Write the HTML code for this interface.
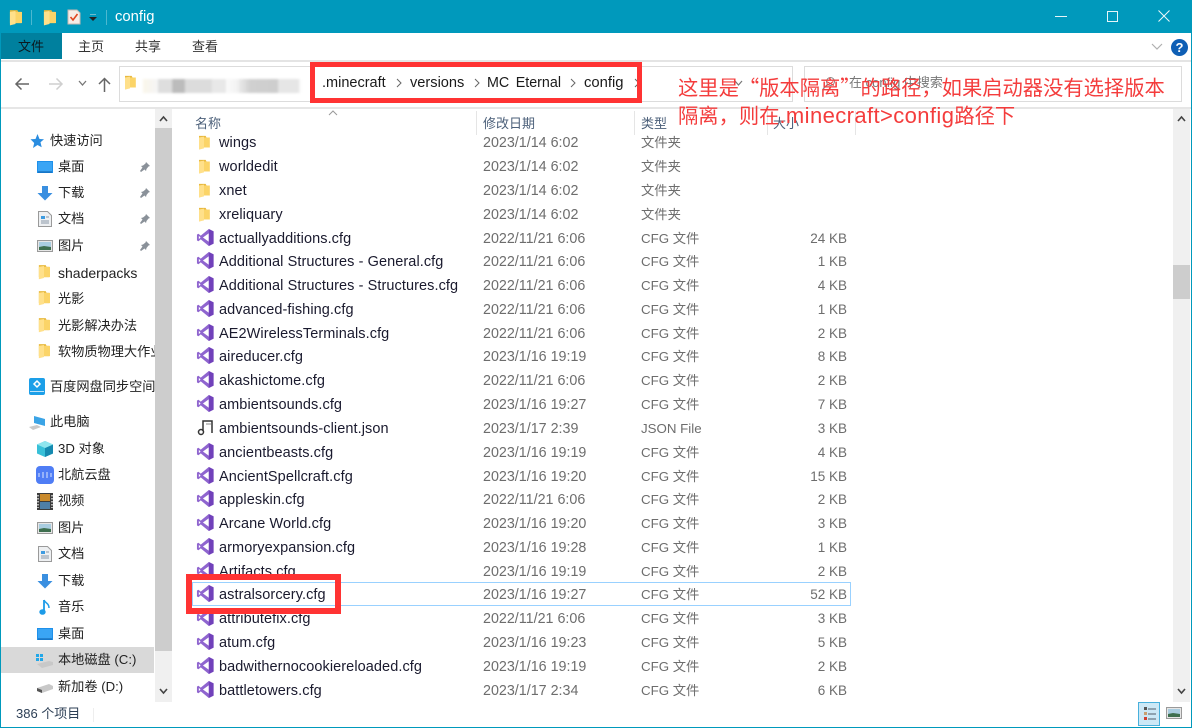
<!DOCTYPE html>
<html><head><meta charset="utf-8"><style>
html,body{margin:0;padding:0;background:#fff}
#w{position:relative;width:1192px;height:728px;overflow:hidden;background:#fff;font-family:"Liberation Sans","Noto Sans CJK SC",sans-serif;font-size:14px;color:#1a1a1a}
#w div,#w span,#w svg{position:absolute}
.tx{white-space:nowrap;line-height:20px}
.nv{left:0;height:20px;margin-top:1px;white-space:nowrap;line-height:20px;color:#222;font-size:13.2px}
.r{left:190px;width:670px;height:24px;line-height:24px;white-space:nowrap;font-size:14.5px}
.r .n{left:29px;top:1px;color:#1a1a2e;letter-spacing:.08px}
.r .d{left:293px;top:1px;color:#6d6d6d;font-size:14.3px}
.r .t{left:451px;top:1px;color:#6d6d6d;font-size:13.3px}
.r .s{right:13px;top:.5px;color:#6d6d6d;font-size:13.5px}
.r svg{left:6px;top:2px}
.h{top:114px;color:#4c607a;font-size:13px;line-height:20px}
.sp{top:111px;width:1px;height:24px;background:#e5e5e5}
.red{color:#f43c3c;font-size:20.3px;line-height:28px;white-space:nowrap;font-family:"Noto Sans CJK SC","Liberation Sans",sans-serif}
.red span{position:static!important;font-family:"Liberation Sans",sans-serif;font-size:22px;letter-spacing:.4px}
</style></head><body><div id="w">
<svg width="0" height="0" style="left:0;top:0"><defs>
<symbol id="f" viewBox="0 0 14 18"><path d="M1 1h8l1 2h3v12H1z" fill="#e8b93f"/><path d="M4 3h10v12H4z" fill="#fbd468"/><path d="M1 3l6-1v14l-6 1.500z" fill="#ffe08a"/></symbol>
<symbol id="v" viewBox="0 0 20 20"><path d="M13.500 1l5 2.500v13l-5 2.500L5 12l-2.500 2L1 13V7l1.500-1L5 8z" fill="#8f65cf"/><path d="M13.500 5.500v9L7.300 10zM3 8.300v3.400L4.800 10z" fill="#fff"/><path d="M13.500 1l5 2.500v13l-5 2.500v-4.500v-9z" fill="#7141ba"/></symbol>
<symbol id="pin" viewBox="0 0 12 12"><path d="M7 1l4 4-1.500.5L7.500 8l-.5 2-1.500-1.500L2 11l-1-1 2.500-3.500L2 5l2-.5L6.500 2.500z" fill="#8a9199"/></symbol>
<symbol id="dt" viewBox="0 0 16 13"><rect width="16" height="12" fill="#1e90ea"/><rect x="1" y="1" width="14" height="9.500" fill="#3aa5f5"/><rect x="1" y="10.500" width="14" height="1" fill="#0c5da8"/></symbol>
<symbol id="dl" viewBox="0 0 16 16"><path d="M5 1h6v7h4.500L8 15.500.5 8H5z" fill="#3a8fe0"/></symbol>
<symbol id="doc" viewBox="0 0 14 16"><path d="M.5.500h9l4 4v11H.5z" fill="#eef0f2" stroke="#9a9a9a"/><path d="M3 5h4v3H3z" fill="#3e9be0"/><path d="M3 10h8M3 12h8M8 6h3" stroke="#8a98a8"/></symbol>
<symbol id="pic" viewBox="0 0 16 12"><rect x=".5" y=".5" width="15" height="11" fill="#e6e6e6" stroke="#9a9a9a"/><rect x="2" y="2" width="12" height="8" fill="#a9cde0"/><path d="M2 7l5-1 7 1v3H2z" fill="#3e6f4f"/></symbol>
</defs></svg>

<!-- frame and title -->
<div style="left:0;top:0;width:1192px;height:33px;background:#0099bc"></div>
<div style="left:0;top:33px;width:1px;height:695px;background:#0099bc"></div>
<div style="left:1191px;top:33px;width:1px;height:695px;background:#0099bc"></div>
<div style="left:0;top:727px;width:1192px;height:1px;background:#0099bc"></div>
<svg style="left:9px;top:9px" width="13" height="17"><use href="#f"/></svg>
<div style="left:31px;top:10px;width:1px;height:15px;background:#4db8d0"></div>
<svg style="left:43px;top:9px" width="13" height="17"><use href="#f"/></svg>
<svg style="left:67px;top:9px" width="14" height="16" viewBox="0 0 14 16"><path d="M1 1h9l3 3v11H1z" fill="#f6ece6" stroke="#c9b8b0"/><path d="M3.500 8l2.500 3 4.500-6" stroke="#e0451f" stroke-width="1.600" fill="none"/></svg>
<svg style="left:89px;top:14px" width="8" height="8"><path d="M1 0h6" stroke="#ddd"/><path d="M0 3h8L4 7z" fill="#222"/></svg>
<div style="left:106px;top:10px;width:1px;height:15px;background:#4db8d0"></div>
<div class="tx" style="left:115px;top:7px;color:#fff;font-size:14.8px">config</div>
<div style="left:1055px;top:16px;width:12px;height:1px;background:#e6f5f9"></div>
<div style="left:1107px;top:11px;width:9px;height:9px;border:1px solid #e6f5f9"></div>
<svg style="left:1158px;top:10px" width="12" height="12"><path d="M.5.500l11 11M11.500.500l-11 11" stroke="#eef8fa" fill="none"/></svg>

<!-- ribbon tabs -->
<div style="left:1px;top:33px;width:61px;height:26px;background:#00809e"></div>
<div class="tx" style="left:18px;top:37px;font-size:13px;color:#0b1a20">文件</div>
<div class="tx" style="left:78px;top:37px;font-size:13px;color:#333">主页</div>
<div class="tx" style="left:135px;top:37px;font-size:13px;color:#333">共享</div>
<div class="tx" style="left:192px;top:37px;font-size:13px;color:#333">查看</div>
<svg style="left:1151px;top:43px" width="12" height="8"><path d="M1 1l5 5 5-5" stroke="#b0b0b0" fill="none" stroke-width="1.200"/></svg>
<div style="left:1171px;top:39px;width:17px;height:17px;border-radius:50%;background:#0f5fb5;color:#fff;font:bold 13px/17px 'Liberation Sans',sans-serif;text-align:center">?</div>
<div style="left:1px;top:60px;width:1190px;height:2px;background:#e4e4e4"></div>

<!-- address row -->
<svg style="left:14px;top:77px" width="16" height="14"><path d="M15 7H2M7.500 1.500L2 7l5.500 5.500" stroke="#666" stroke-width="1.500" fill="none"/></svg>
<svg style="left:48px;top:77px" width="16" height="14"><path d="M1 7h13M8.500 1.500L14 7l-5.500 5.500" stroke="#cfcfcf" stroke-width="1.500" fill="none"/></svg>
<svg style="left:78px;top:80px" width="9" height="7"><path d="M1 1l3.500 4L8 1" stroke="#777" stroke-width="1.300" fill="none"/></svg>
<svg style="left:98px;top:77px" width="13" height="15"><path d="M6.500 15V2M1 7l5.500-5.500L12 7" stroke="#666" stroke-width="1.500" fill="none"/></svg>
<div style="left:119px;top:66px;width:672px;height:34px;border:1px solid #dcdcdc"></div>
<div style="left:804px;top:66px;width:376px;height:34px;border:1px solid #dcdcdc"></div>
<svg style="left:124px;top:75px" width="12" height="15"><use href="#f"/></svg>
<div style="left:143px;top:79px;width:158px;height:14px;background:linear-gradient(90deg,#faf6ea 0,#f5f5f5 9%,#dedede 10%,#dedede 18%,#bcbcbc 19%,#bcbcbc 26%,#dcdcdc 27%,#dcdcdc 43%,#e8e8e8 44%,#e8e8e8 52%,#fafafa 53%,#f2f2f2 60%,#e9e9e9 61%,#d0d0d0 68%,#cecece 85%,#e6e6e6 86%,#e6e6e6 98%,#fff 100%);filter:blur(1px)"></div>
<div class="tx" style="left:322px;top:73px;font-size:14.5px;color:#1a1a1a">.minecraft</div>
<svg style="left:396px;top:78px" width="6" height="10"><path d="M1 1l4 4-4 4" stroke="#666" fill="none"/></svg>
<div class="tx" style="left:410px;top:73px;font-size:14.6px">versions</div>
<svg style="left:474px;top:78px" width="6" height="10"><path d="M1 1l4 4-4 4" stroke="#666" fill="none"/></svg>
<div class="tx" style="left:487px;top:73px;font-size:14.3px;word-spacing:2.500px">MC Eternal</div>
<svg style="left:570px;top:78px" width="6" height="10"><path d="M1 1l4 4-4 4" stroke="#666" fill="none"/></svg>
<div class="tx" style="left:584px;top:73px;font-size:14.8px">config</div>
<svg style="left:634px;top:78px" width="6" height="10"><path d="M1 1l4 4-4 4" stroke="#666" fill="none"/></svg>
<svg style="left:734px;top:80px" width="9" height="7"><path d="M1 1l3.500 4L8 1" stroke="#777" stroke-width="1.200" fill="none"/></svg>
<svg style="left:822px;top:76px" width="14" height="14"><circle cx="8.500" cy="5.500" r="4" stroke="#888" fill="none"/><path d="M5.500 8.500L1 13" stroke="#888" stroke-width="1.300"/></svg>
<div class="tx" style="left:849px;top:73px;color:#777;font-size:13px">在 config 中搜索</div>
<div style="left:1px;top:107px;width:1190px;height:2px;background:#e6e6e6"></div>

<!-- nav pane -->
<svg style="left:30px;top:134px" width="14" height="14" viewBox="0 0 14 14"><path d="M7.500 0l2 5 4.500.3-3.500 3 1.200 5L7.500 11l-4.500 3 1.200-5L.5 5.300 5.500 5z" fill="#2a8de0"/></svg>
<div class="nv" style="left:50px;top:130px">快速访问</div>
<svg style="left:37px;top:161px" width="16" height="13"><use href="#dt"/></svg><div class="nv" style="left:58px;top:156px">桌面</div>
<svg style="left:37px;top:185px" width="16" height="16"><use href="#dl"/></svg><div class="nv" style="left:58px;top:182px">下载</div>
<svg style="left:38px;top:211px" width="14" height="16"><use href="#doc"/></svg><div class="nv" style="left:58px;top:208px">文档</div>
<svg style="left:37px;top:240px" width="16" height="12"><use href="#pic"/></svg><div class="nv" style="left:58px;top:235px">图片</div>
<svg style="left:139px;top:161px" width="12" height="12"><use href="#pin"/></svg>
<svg style="left:139px;top:187px" width="12" height="12"><use href="#pin"/></svg>
<svg style="left:139px;top:213px" width="12" height="12"><use href="#pin"/></svg>
<svg style="left:139px;top:240px" width="12" height="12"><use href="#pin"/></svg>
<svg style="left:38px;top:264px" width="12" height="16"><use href="#f"/></svg><div class="nv" style="left:58px;top:262px;font-size:14px">shaderpacks</div>
<svg style="left:38px;top:290px" width="12" height="16"><use href="#f"/></svg><div class="nv" style="left:58px;top:288px">光影</div>
<svg style="left:38px;top:317px" width="12" height="16"><use href="#f"/></svg><div class="nv" style="left:58px;top:315px">光影解决办法</div>
<svg style="left:38px;top:343px" width="12" height="16"><use href="#f"/></svg>
<div class="nv" style="left:58px;top:341px;width:97px;overflow:hidden">软物质物理大作业</div>
<svg style="left:29px;top:378px" width="16" height="17" viewBox="0 0 16 17"><rect width="16" height="17" rx="2" fill="#1c9fe8"/><path d="M8 3l3 3-3 3-3-3z" fill="none" stroke="#fff" stroke-width="1.500"/><rect x="1" y="13" width="14" height="1" fill="#bfe4fa"/></svg>
<div class="nv" style="left:50px;top:376px;width:105px;overflow:hidden">百度网盘同步空间</div>
<svg style="left:28px;top:415px" width="18" height="16" viewBox="0 0 18 16"><path d="M6 1l11 3v7L6 8z" fill="#3ba4e6"/><path d="M1 12l8-2 4 2-8 3z" fill="#c9c9c9"/></svg>
<div class="nv" style="left:50px;top:411px">此电脑</div>
<svg style="left:37px;top:441px" width="16" height="16" viewBox="0 0 16 16"><path d="M8 0l8 3.500v9L8 16 0 12.500v-9z" fill="#38c0d8"/><path d="M8 7l8-3.500v9L8 16z" fill="#158ab0"/><path d="M8 0l8 3.500L8 7 0 3.500z" fill="#8fe6ee"/></svg>
<div class="nv" style="left:58px;top:438px">3D 对象</div>
<svg style="left:36px;top:466px" width="18" height="18"><rect width="18" height="18" rx="4" fill="#4f7df5"/><path d="M3 11V7M7 6v6M11 6v6M15 7v4" stroke="#dbe6ff"/></svg>
<div class="nv" style="left:58px;top:464px">北航云盘</div>
<svg style="left:37px;top:493px" width="16" height="17"><rect width="16" height="17" fill="#3c3c3c"/><rect x="3" y="1" width="10" height="7" fill="#c98a2c"/><rect x="3" y="9" width="10" height="7" fill="#4e7fa8"/><path d="M1 2v13M15 2v13" stroke="#ddd" stroke-dasharray="1.500 1.500" stroke-width="1.500"/></svg>
<div class="nv" style="left:58px;top:490px">视频</div>
<svg style="left:37px;top:522px" width="16" height="12"><use href="#pic"/></svg><div class="nv" style="left:58px;top:517px">图片</div>
<svg style="left:38px;top:546px" width="14" height="16"><use href="#doc"/></svg><div class="nv" style="left:58px;top:543px">文档</div>
<svg style="left:37px;top:573px" width="16" height="16"><use href="#dl"/></svg><div class="nv" style="left:58px;top:570px">下载</div>
<svg style="left:39px;top:599px" width="12" height="17" viewBox="0 0 12 17"><path d="M5 1v11" stroke="#1d9be8" stroke-width="1.800"/><ellipse cx="3.500" cy="13" rx="3.200" ry="2.800" fill="#1d9be8"/><path d="M5 1c1 3 5 3 5 8" stroke="#1d9be8" stroke-width="1.500" fill="none"/></svg>
<div class="nv" style="left:58px;top:596px">音乐</div>
<svg style="left:37px;top:628px" width="16" height="13"><use href="#dt"/></svg><div class="nv" style="left:58px;top:623px">桌面</div>
<div style="left:1px;top:647px;width:153px;height:26px;background:#d9d9d9"></div>
<svg style="left:36px;top:653px" width="18" height="15" viewBox="0 0 18 15"><path d="M0 1h3v3H0zM4 1h3v3H4zM0 5h3v3H0zM4 5h3v3H4z" fill="#22a7e8"/><path d="M1 11l12-3 4 1v3L6 15z" fill="#c8c8c8"/></svg>
<div class="nv" style="left:58px;top:649px">本地磁盘 (C:)</div>
<svg style="left:36px;top:683px" width="18" height="10" viewBox="0 0 18 10"><path d="M1 5l12-4 4 2v3L6 10 1 8z" fill="#c8c8c8"/><path d="M1 5l5 2v3L1 8z" fill="#555"/></svg>
<div class="nv" style="left:58px;top:676px">新加卷 (D:)</div>
<!-- nav scrollbar -->
<div style="left:155px;top:109px;width:17px;height:593px;background:#f0f0f0"></div>
<div style="left:155px;top:128px;width:17px;height:523px;background:#cdcdcd"></div>
<svg style="left:159px;top:115px" width="9" height="7"><path d="M1 6l3.500-4L8 6" stroke="#444" stroke-width="1.600" fill="none"/></svg>
<svg style="left:159px;top:688px" width="9" height="7"><path d="M1 1l3.500 4L8 1" stroke="#444" stroke-width="1.600" fill="none"/></svg>

<!-- column headers -->
<div class="h" style="left:195px">名称</div>
<svg style="left:328px;top:110px" width="10" height="6"><path d="M1 5l4-4 4 4" stroke="#999" fill="none"/></svg>
<div class="h" style="left:483px">修改日期</div>
<div class="h" style="left:641px">类型</div>
<div class="h" style="left:773px">大小</div>
<div class="sp" style="left:476px"></div><div class="sp" style="left:634px"></div><div class="sp" style="left:767px"></div><div class="sp" style="left:855px"></div>

<!-- selection -->
<div style="left:192px;top:582px;width:657px;height:22px;border:1px solid #99d1ff"></div>

<!-- rows -->
<div class="r" style="top:130px"><svg width="16" height="18"><use href="#f" width="12" height="15" x="2" y="3"/></svg><span class="n">wings</span><span class="d">2023/1/14 6:02</span><span class="t">文件夹</span></div>
<div class="r" style="top:154px"><svg width="16" height="18"><use href="#f" width="12" height="15" x="2" y="3"/></svg><span class="n">worldedit</span><span class="d">2023/1/14 6:02</span><span class="t">文件夹</span></div>
<div class="r" style="top:178px"><svg width="16" height="18"><use href="#f" width="12" height="15" x="2" y="3"/></svg><span class="n">xnet</span><span class="d">2023/1/14 6:02</span><span class="t">文件夹</span></div>
<div class="r" style="top:202px"><svg width="16" height="18"><use href="#f" width="12" height="15" x="2" y="3"/></svg><span class="n">xreliquary</span><span class="d">2023/1/14 6:02</span><span class="t">文件夹</span></div>
<div class="r" style="top:226px"><svg width="19" height="19"><use href="#v"/></svg><span class="n">actuallyadditions.cfg</span><span class="d">2022/11/21 6:06</span><span class="t">CFG 文件</span><span class="s">24 KB</span></div>
<div class="r" style="top:249px"><svg width="19" height="19"><use href="#v"/></svg><span class="n">Additional Structures - General.cfg</span><span class="d">2022/11/21 6:06</span><span class="t">CFG 文件</span><span class="s">1 KB</span></div>
<div class="r" style="top:273px"><svg width="19" height="19"><use href="#v"/></svg><span class="n">Additional Structures - Structures.cfg</span><span class="d">2022/11/21 6:06</span><span class="t">CFG 文件</span><span class="s">4 KB</span></div>
<div class="r" style="top:297px"><svg width="19" height="19"><use href="#v"/></svg><span class="n">advanced-fishing.cfg</span><span class="d">2022/11/21 6:06</span><span class="t">CFG 文件</span><span class="s">1 KB</span></div>
<div class="r" style="top:321px"><svg width="19" height="19"><use href="#v"/></svg><span class="n">AE2WirelessTerminals.cfg</span><span class="d">2022/11/21 6:06</span><span class="t">CFG 文件</span><span class="s">2 KB</span></div>
<div class="r" style="top:344px"><svg width="19" height="19"><use href="#v"/></svg><span class="n">aireducer.cfg</span><span class="d">2023/1/16 19:19</span><span class="t">CFG 文件</span><span class="s">8 KB</span></div>
<div class="r" style="top:368px"><svg width="19" height="19"><use href="#v"/></svg><span class="n">akashictome.cfg</span><span class="d">2022/11/21 6:06</span><span class="t">CFG 文件</span><span class="s">2 KB</span></div>
<div class="r" style="top:392px"><svg width="19" height="19"><use href="#v"/></svg><span class="n">ambientsounds.cfg</span><span class="d">2023/1/16 19:27</span><span class="t">CFG 文件</span><span class="s">7 KB</span></div>
<div class="r" style="top:416px"><svg width="19" height="19" viewBox="0 0 19 19"><path d="M7 13V3h9v12" fill="none" stroke="#333" stroke-width="1.500"/><circle cx="5" cy="14" r="2.500" fill="none" stroke="#333" stroke-width="1.500"/><path d="M10 6h5" stroke="#888"/></svg><span class="n">ambientsounds-client.json</span><span class="d">2023/1/17 2:39</span><span class="t">JSON File</span><span class="s">3 KB</span></div>
<div class="r" style="top:440px"><svg width="19" height="19"><use href="#v"/></svg><span class="n">ancientbeasts.cfg</span><span class="d">2023/1/16 19:19</span><span class="t">CFG 文件</span><span class="s">4 KB</span></div>
<div class="r" style="top:464px"><svg width="19" height="19"><use href="#v"/></svg><span class="n">AncientSpellcraft.cfg</span><span class="d">2023/1/16 19:20</span><span class="t">CFG 文件</span><span class="s">15 KB</span></div>
<div class="r" style="top:487px"><svg width="19" height="19"><use href="#v"/></svg><span class="n">appleskin.cfg</span><span class="d">2022/11/21 6:06</span><span class="t">CFG 文件</span><span class="s">2 KB</span></div>
<div class="r" style="top:511px"><svg width="19" height="19"><use href="#v"/></svg><span class="n">Arcane World.cfg</span><span class="d">2023/1/16 19:20</span><span class="t">CFG 文件</span><span class="s">3 KB</span></div>
<div class="r" style="top:535px"><svg width="19" height="19"><use href="#v"/></svg><span class="n">armoryexpansion.cfg</span><span class="d">2023/1/16 19:28</span><span class="t">CFG 文件</span><span class="s">1 KB</span></div>
<div class="r" style="top:559px"><svg width="19" height="19"><use href="#v"/></svg><span class="n">Artifacts.cfg</span><span class="d">2023/1/16 19:19</span><span class="t">CFG 文件</span><span class="s">2 KB</span></div>
<div class="r" style="top:582px"><svg width="19" height="19"><use href="#v"/></svg><span class="n">astralsorcery.cfg</span><span class="d">2023/1/16 19:27</span><span class="t">CFG 文件</span><span class="s">52 KB</span></div>
<div class="r" style="top:606px"><svg width="19" height="19"><use href="#v"/></svg><span class="n">attributefix.cfg</span><span class="d">2022/11/21 6:06</span><span class="t">CFG 文件</span><span class="s">3 KB</span></div>
<div class="r" style="top:630px"><svg width="19" height="19"><use href="#v"/></svg><span class="n">atum.cfg</span><span class="d">2023/1/16 19:23</span><span class="t">CFG 文件</span><span class="s">5 KB</span></div>
<div class="r" style="top:654px"><svg width="19" height="19"><use href="#v"/></svg><span class="n">badwithernocookiereloaded.cfg</span><span class="d">2023/1/16 19:19</span><span class="t">CFG 文件</span><span class="s">2 KB</span></div>
<div class="r" style="top:678px"><svg width="19" height="19"><use href="#v"/></svg><span class="n">battletowers.cfg</span><span class="d">2023/1/17 2:34</span><span class="t">CFG 文件</span><span class="s">6 KB</span></div>

<!-- right scrollbar -->
<div style="left:1173px;top:109px;width:17px;height:593px;background:#f0f0f0"></div>
<div style="left:1173px;top:265px;width:17px;height:34px;background:#cdcdcd"></div>
<svg style="left:1177px;top:115px" width="9" height="7"><path d="M1 6l3.500-4L8 6" stroke="#444" stroke-width="1.600" fill="none"/></svg>
<svg style="left:1177px;top:688px" width="9" height="7"><path d="M1 1l3.500 4L8 1" stroke="#444" stroke-width="1.600" fill="none"/></svg>

<!-- status -->
<div class="tx" style="left:16px;top:704px;font-size:13px;color:#2d3f55">386 个项目</div>
<div style="left:93px;top:708px;width:1px;height:14px;background:#eee"></div>
<div style="left:1138px;top:702px;width:22px;height:24px;background:#cce8f6;border:1px solid #48b0dc;box-sizing:border-box"></div>
<svg style="left:1143px;top:706px" width="14" height="16"><path d="M5 3h8M5 8h8M5 13h8" stroke="#7a8a98" stroke-width="1.500"/><rect x="1" y="1" width="3" height="3" fill="#555"/><rect x="1" y="6" width="3" height="3" fill="#c9a070"/><rect x="1" y="11" width="3" height="3" fill="#d04030"/></svg>
<svg style="left:1166px;top:707px" width="16" height="12"><use href="#pic"/></svg>

<!-- red annotation boxes -->
<div style="left:310px;top:62px;width:322px;height:31px;border:5px solid #ff3333"></div>
<div style="left:186px;top:574px;width:143px;height:28px;border:6px solid #ff3333"></div>
<div class="red" style="left:678px;top:72px">这里是“版本隔离”的路径&#65292;如果启动器没有选择版本</div>
<div class="red" style="left:678px;top:100px">隔离&#65292;则在<span>.minecraft&gt;config</span>路径下</div>
</div></body></html>
